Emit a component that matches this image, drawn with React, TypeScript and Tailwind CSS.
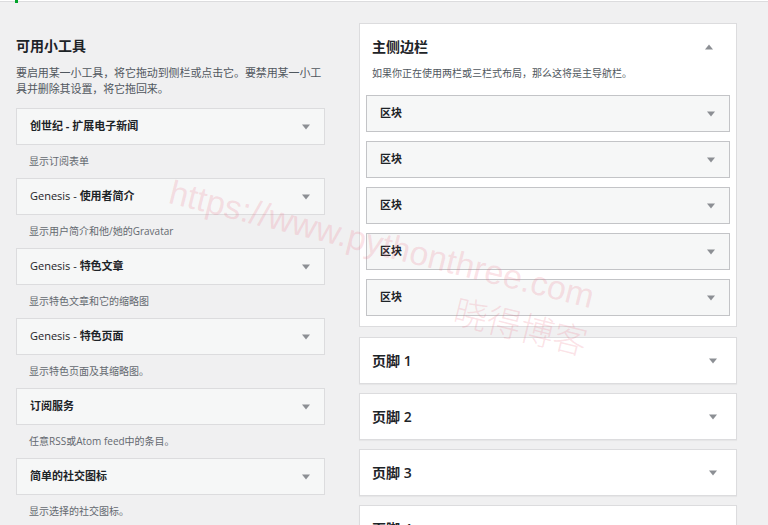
import React from "react";

const Arrow = ({ up = false }: { up?: boolean }) => (
  <svg width="8" height="6" viewBox="0 0 8 6" className="shrink-0">
    {up ? <path d="M0 5.5 L4 0.5 L8 5.5 Z" fill="#8c8f94" /> : <path d="M0 0.5 L8 0.5 L4 5.5 Z" fill="#8c8f94" />}
  </svg>
);

const widgets: { title: React.ReactNode; desc: string }[] = [
  { title: <>创世纪 - 扩展电子新闻</>, desc: "显示订阅表单" },
  { title: <><span className="font-normal">Genesis - </span>使用者简介</>, desc: "显示用户简介和他/她的Gravatar" },
  { title: <><span className="font-normal">Genesis - </span>特色文章</>, desc: "显示特色文章和它的缩略图" },
  { title: <><span className="font-normal">Genesis - </span>特色页面</>, desc: "显示特色页面及其缩略图。" },
  { title: <>订阅服务</>, desc: "任意RSS或Atom feed中的条目。" },
  { title: <>简单的社交图标</>, desc: "显示选择的社交图标。" },
];

export default function App() {
  return (
    <div
      className="relative w-[768px] h-[525px] overflow-hidden bg-[#f0f0f1] text-[#1d2327]"
      style={{ fontFamily: '"Open Sans", "Noto Sans CJK SC", sans-serif' }}
    >
      <div className="h-[2px] bg-white border-b border-[#dcdcde] relative">
        <div className="absolute left-[15px] top-0 w-[3px] h-[3px] bg-[#00a32a]" />
      </div>
      <div className="flex pl-[16px] gap-[34px]">
        {/* left column */}
        <div className="w-[309px] pt-[34px] flex flex-col">
          <h2 className="text-[14px] font-bold leading-[20px]">可用小工具</h2>
          <p className="mt-[9px] text-[11px] leading-[16px] text-[#50575e] whitespace-nowrap tracking-[-0.1px]">
            要启用某一小工具，将它拖动到侧栏或点击它。要禁用某一小工
            <br />
            具并删除其设置，将它拖回来。
          </p>
          <div className="mt-[11px] flex flex-col">
            {widgets.map((w, i) => (
              <div key={i} className="flex flex-col">
                <div className="h-[37px] border border-[#dcdcde] bg-[#f6f7f7] flex items-center justify-between pl-[13px] pr-[14px]">
                  <span className="text-[11px] font-bold text-[#1d2327]">{w.title}</span>
                  <Arrow />
                </div>
                <div className="h-[33px] flex items-center pl-[13px] text-[10px] text-[#646970]">{w.desc}</div>
              </div>
            ))}
          </div>
        </div>
        {/* right column */}
        <div className="w-[378px] pt-[21px] flex flex-col gap-[10px]">
          <div className="bg-white border border-[#dcdcde] pt-[13px] px-[6px] pb-[10px]">
            <div className="flex items-center justify-between pl-[6px] pr-[17px] h-[20px]">
              <h3 className="text-[14px] font-bold leading-[20px]">主侧边栏</h3>
              <Arrow up />
            </div>
            <p className="pl-[6px] mt-[9px] text-[10px] leading-[14px] text-[#50575e]">
              如果你正在使用两栏或三栏式布局，那么这将是主导航栏。
            </p>
            <div className="mt-[15px] flex flex-col gap-[9px]">
              {[0, 1, 2, 3, 4].map((i) => (
                <div key={i} className="h-[37px] border border-[#c3c4c7] bg-[#f6f7f7] flex items-center justify-between pl-[13px] pr-[14px]">
                  <span className="text-[11px] font-semibold">区块</span>
                  <Arrow />
                </div>
              ))}
            </div>
          </div>
          <div className="flex flex-col gap-[9px]">
            {["页脚 1", "页脚 2", "页脚 3", "页脚 4"].map((t) => (
              <div key={t} className="h-[47px] shrink-0 bg-white border border-[#dcdcde] shadow-[0_1px_1px_rgba(0,0,0,0.04)] flex items-center justify-between pl-[12px] pr-[19px]">
                <span className="text-[14px] font-semibold">{t}</span>
                <Arrow />
              </div>
            ))}
          </div>
        </div>
      </div>
      {/* watermark */}
      <div
        className="absolute left-[170px] top-[166px] text-[34px] text-[rgba(235,110,130,0.2)] whitespace-nowrap pointer-events-none origin-left rotate-[14deg]"
        style={{ fontFamily: '"Liberation Sans", sans-serif' }}
      >
        https://www.pythonthree.com
      </div>
      <div
        className="absolute left-[455px] top-[283px] text-[34px] text-[rgba(235,110,130,0.2)] whitespace-nowrap pointer-events-none origin-left rotate-[14deg]"
        style={{ fontFamily: '"Noto Sans CJK SC", sans-serif', fontWeight: 300 }}
      >
        晓得博客
      </div>
    </div>
  );
}
